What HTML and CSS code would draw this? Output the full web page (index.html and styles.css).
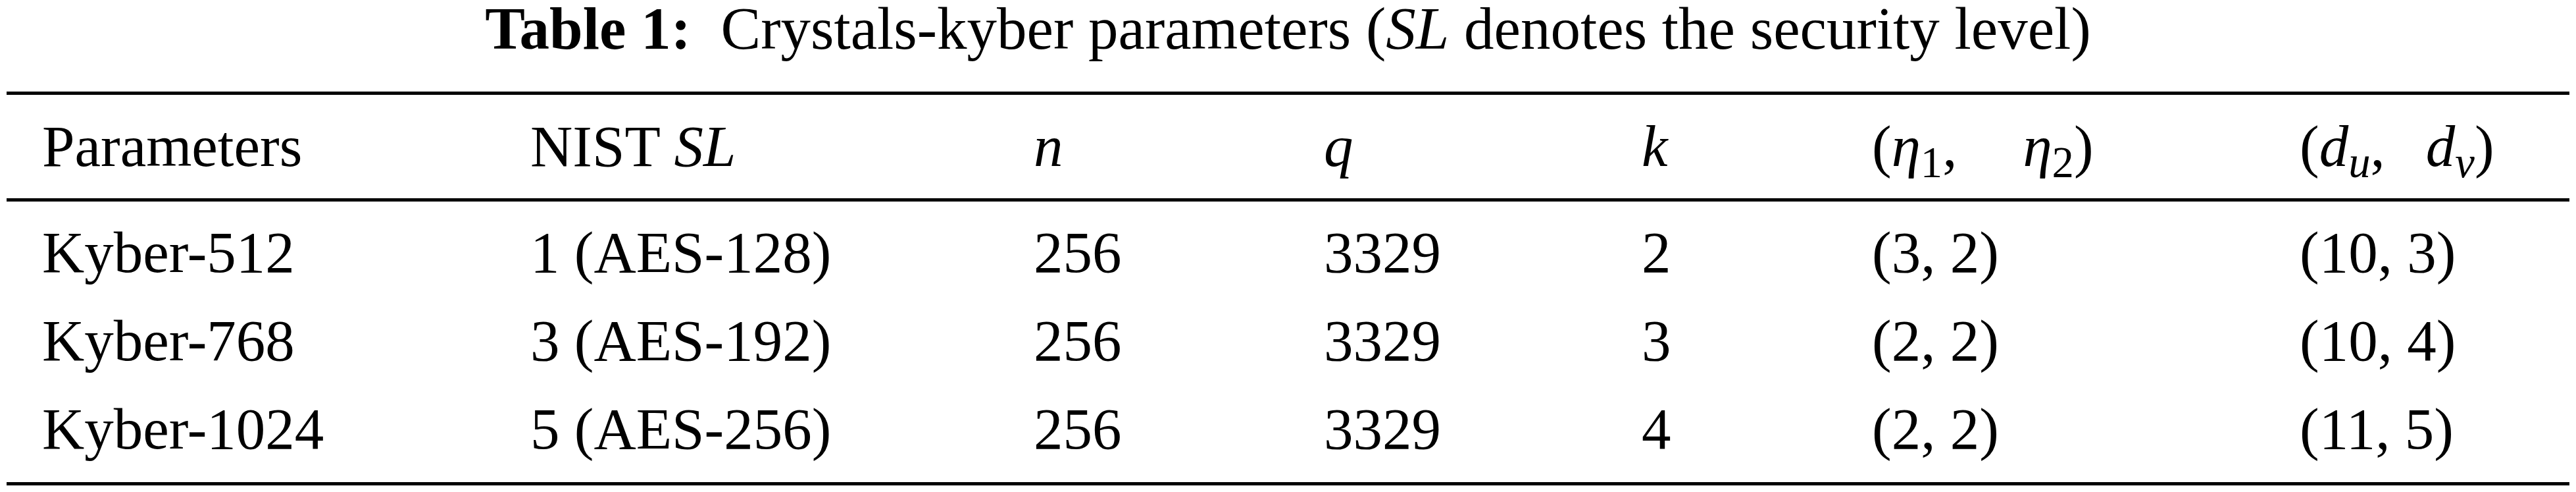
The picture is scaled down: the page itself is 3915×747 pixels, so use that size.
FILE: index.html
```html
<!DOCTYPE html>
<html lang="en">
<head>
<meta charset="utf-8">
<title>Table 1</title>
<link rel="stylesheet" href="styles.css">
</head>
<body>
<div class="page">
  <div class="caption"><b>Table 1:</b>&nbsp; Crystals-kyber parameters (<i>SL</i> denotes the security level)</div>
  <div class="table">
    <div class="row head">
      <div class="cell">Parameters</div>
      <div class="cell">NIST <i>SL</i></div>
      <div class="cell"><i>n</i></div>
      <div class="cell"><i>q</i></div>
      <div class="cell"><i>k</i></div>
      <div class="cell">(<i>η</i><sub>1</sub>,<span class="wide"></span><i>η</i><sub>2</sub>)</div>
      <div class="cell">(<i>d</i><sub><i>u</i></sub>,<span class="mid"></span><i>d</i><sub><i>v</i></sub>)</div>
    </div>
    <div class="body">
      <div class="row">
        <div class="cell">Kyber-512</div>
        <div class="cell">1 (AES-128)</div>
        <div class="cell">256</div>
        <div class="cell">3329</div>
        <div class="cell">2</div>
        <div class="cell">(3, 2)</div>
        <div class="cell">(10, 3)</div>
      </div>
      <div class="row">
        <div class="cell">Kyber-768</div>
        <div class="cell">3 (AES-192)</div>
        <div class="cell">256</div>
        <div class="cell">3329</div>
        <div class="cell">3</div>
        <div class="cell">(2, 2)</div>
        <div class="cell">(10, 4)</div>
      </div>
      <div class="row">
        <div class="cell">Kyber-1024</div>
        <div class="cell">5 (AES-256)</div>
        <div class="cell">256</div>
        <div class="cell">3329</div>
        <div class="cell">4</div>
        <div class="cell">(2, 2)</div>
        <div class="cell">(11, 5)</div>
      </div>
    </div>
  </div>
</div>
</body>
</html>
```
FILE: styles.css
```css
html, body {
  margin: 0;
  padding: 0;
  background: #ffffff;
}
body {
  font-family: "Liberation Serif", "Times New Roman", serif;
  font-size: 89px;
  color: #000000;
}
.page {
  width: 3895px;
  margin-left: 10px;
}
.caption {
  text-align: center;
  font-size: 91px;
  line-height: 88px;
  height: 88px;
  white-space: nowrap;
  margin-bottom: 51px;
}
.caption b {
  font-weight: bold;
}
.table {
  border-top: 5px solid #000;
  border-bottom: 5px solid #000;
}
.row {
  display: grid;
  grid-template-columns: 742px 765px 441px 483px 350px 650px 1fr;
  padding-left: 54px;
  white-space: nowrap;
}
.head {
  line-height: 157px;
  height: 157px;
  border-bottom: 5px solid #000;
}
.body {
  padding-top: 10px;
  padding-bottom: 14px;
}
.body .row {
  line-height: 134px;
  height: 134px;
}
sub {
  font-size: 0.75em;
  line-height: 0;
  vertical-align: -0.26em;
}
.wide {
  display: inline-block;
  width: 100px;
}
.mid {
  display: inline-block;
  width: 62px;
}
```
